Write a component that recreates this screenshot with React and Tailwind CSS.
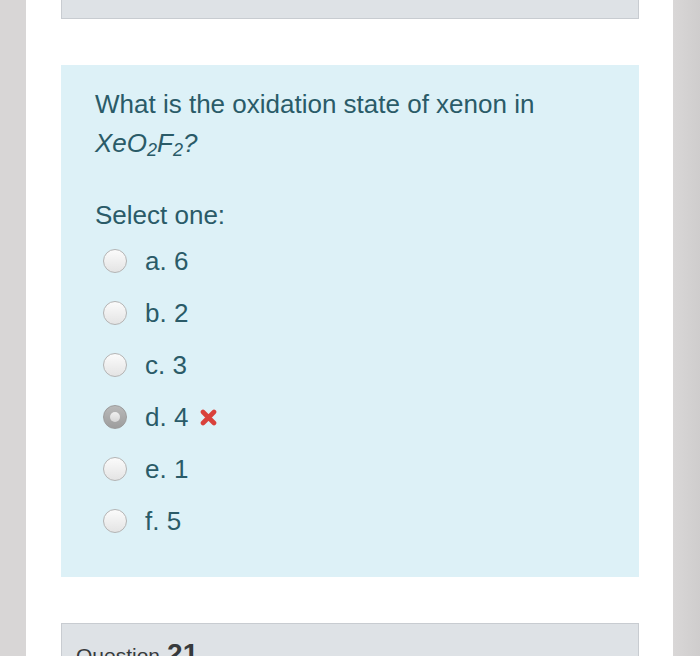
const options = [
  { label: 'a.', value: '6' },
  { label: 'b.', value: '2' },
  { label: 'c.', value: '3' },
  { label: 'd.', value: '4', checked: true, wrong: true },
  { label: 'e.', value: '1' },
  { label: 'f.', value: '5' },
]

function Radio({ checked }) {
  if (checked) {
    return (
      <span className="flex h-[24px] w-[24px] shrink-0 items-center justify-center rounded-full border border-[#9c9c9c] bg-gradient-to-b from-[#b9b9b9] to-[#9d9d9d]">
        <span className="h-[10px] w-[10px] rounded-full bg-gradient-to-b from-[#f0f0f0] to-[#d6d6d6]" />
      </span>
    )
  }
  return (
    <span className="h-[24px] w-[24px] shrink-0 rounded-full border border-[#b4b4b4] bg-gradient-to-b from-[#fbfbfb] to-[#e4e4e4]" />
  )
}

function WrongMark() {
  return (
    <svg width="17" height="17" viewBox="0 0 17 17" className="ml-[12px]">
      <path d="M3 3 L14 14 M14 3 L3 14" stroke="#d9413b" strokeWidth="4.6" strokeLinecap="round" />
    </svg>
  )
}

export default function App() {
  return (
    <div
      className="flex h-[656px] w-[700px] overflow-hidden bg-[#d7d5d5]"
      style={{ fontFamily: '"Liberation Sans", Arial, sans-serif' }}
    >
      <div className="w-[26px] shrink-0 bg-[#d8d6d6]" />

      <main className="flex flex-1 flex-col bg-white pl-[35px] pr-[34px]">
        {/* previous question footer */}
        <div className="h-[19px] shrink-0 border-x border-b border-[#c8ccd1] bg-[#dee2e6]" />

        {/* question body */}
        <section className="mt-[46px] h-[512px] shrink-0 bg-[#ddf1f7] pl-[34px] pr-[34px] pt-[20px] text-[26px] leading-[39px] text-[#2a5b68]">
          <p>
            What is the oxidation state of xenon in{' '}
            <i>
              XeO<sub className="-bottom-[0.2em] text-[18px]">2</sub>F<sub className="-bottom-[0.2em] text-[18px]">2</sub>?
            </i>
          </p>

          <p className="mt-[33px]">Select one:</p>

          <div className="flex flex-col">
            {options.map((o) => (
              <div key={o.label} className="flex h-[52px] items-center pl-[8px]">
                <Radio checked={o.checked} />
                <span className="ml-[18px]">
                  {o.label} {o.value}
                </span>
                {o.wrong && <WrongMark />}
              </div>
            ))}
          </div>
        </section>

        {/* next question header */}
        <div className="mt-[46px] flex-1 border-x border-t border-[#c8ccd1] bg-[#dee2e6] pl-[14px] pt-[16px]">
          <h3 className="flex items-baseline gap-[7px] text-[#373a3c]">
            <span className="text-[21px]">Question</span>
            <span className="text-[28px] font-bold leading-[28px]">21</span>
          </h3>
        </div>
      </main>

      <div className="w-[27px] shrink-0 bg-gradient-to-r from-[#d9d7d7] to-[#cfcdcd]" />
    </div>
  )
}
